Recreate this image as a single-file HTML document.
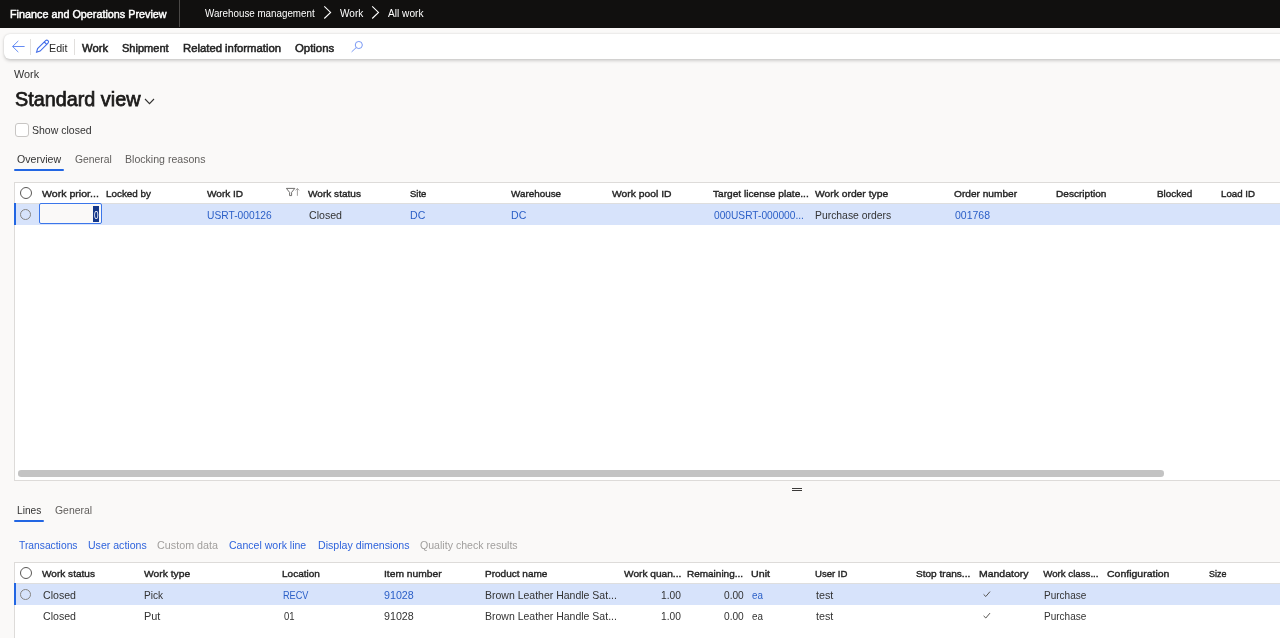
<!DOCTYPE html>
<html><head><meta charset="utf-8"><title>All work</title>
<style>
*{box-sizing:border-box;margin:0;padding:0}
html,body{width:1280px;height:638px;overflow:hidden;background:#faf9f8;font-family:"Liberation Sans",sans-serif}
.a{position:absolute}
.t{position:absolute;white-space:pre;transform-origin:0 0}
#top{left:0;top:0;width:1280px;height:27.5px;background:#11100f}
#topsep{left:179px;top:0;width:1px;height:26.5px;background:#4a4846}
#bar{left:4px;top:34px;width:1290px;height:25px;background:#fff;border-radius:6px;box-shadow:0 1.2px 3.4px rgba(0,0,0,.17),0 0 2px rgba(0,0,0,.09)}
.vsep{width:1px;background:#e1dfdd}
.grid{background:#fff;border:1px solid #dddbd9;border-right:none}
.hline{height:1px;background:#dedede}
.sel{background:#d7e3fb}
.radio{border:1.1px solid #5a5856;border-radius:50%;background:#fff}
</style></head><body>
<div class="a" id="top"></div>
<div class="a" id="topsep"></div>
<svg class="a" style="left:0;top:0" width="1280" height="28" viewBox="0 0 1280 28" fill="none" stroke="#fff" stroke-width="1.1">
<path d="M324.3 6.3 L330.6 12.4 L324.3 18.5"/>
<path d="M372.2 6.3 L378.5 12.4 L372.2 18.5"/>
</svg>
<div class="a" id="bar"></div>
<div class="a vsep" style="left:30px;top:38.5px;height:16.5px"></div>
<div class="a vsep" style="left:74px;top:38.5px;height:16.5px"></div>
<!-- action bar icons -->
<svg class="a" style="left:0;top:30px" width="400" height="32" viewBox="0 30 400 32" fill="none" stroke="#4a76ee" stroke-width="0.95">
<path d="M24.6 46.5 H12.6 M18.3 40.9 L12.6 46.5 L18.3 52.1" stroke="#5c85f2"/>
<path d="M36.6 52.2 L37.6 48.6 L45.6 40.7 a1.6 1.6 0 0 1 2.4 2.4 L40.1 51.1 Z M44.3 42 L46.7 44.4" stroke="#3f6be9" stroke-width="1.1"/>
<circle cx="358.8" cy="45" r="3.55" stroke="#6a8df3" stroke-width="0.9"/><path d="M356.2 47.6 L351.6 51.9" stroke="#6a8df3" stroke-width="0.9"/>
</svg>
<!-- title chevron -->
<svg class="a" style="left:140px;top:95px" width="20" height="12" viewBox="140 95 20 12" fill="none" stroke="#323130" stroke-width="1.1"><path d="M145 99 L149.5 103.6 L154 99"/></svg>
<!-- checkbox -->
<div class="a" style="left:15px;top:123px;width:14px;height:13.5px;border:1px solid #c8c6c4;border-radius:3px;background:#fff"></div>
<!-- tab underlines -->
<div class="a" style="left:14px;top:169px;width:50px;height:2px;background:#2266e3;border-radius:1px"></div>
<div class="a" style="left:14px;top:520px;width:30px;height:2px;background:#2266e3;border-radius:1px"></div>

<!-- grid 1 -->
<div class="a grid" style="left:13.5px;top:182px;width:1270px;height:299px"></div>
<div class="a sel" style="left:15px;top:203.4px;width:1265px;height:21.3px"></div>
<div class="a hline" style="left:15px;top:202.5px;width:1265px"></div>
<div class="a" style="left:14px;top:203.3px;width:2px;height:21.4px;background:#2266e3"></div>
<div class="a radio" style="left:20.3px;top:186.6px;width:12px;height:12px"></div>
<div class="a radio" style="left:20.2px;top:208.7px;width:11.2px;height:11.2px;border:1.15px solid #858381;background:transparent"></div>
<div class="a" style="left:39.3px;top:203.3px;width:62.6px;height:20.6px;border:1px solid #3b76ea;border-radius:2px;background:#faf9f8"></div>
<div class="a" style="left:93.2px;top:206.1px;width:5.8px;height:15.7px;background:#14378a"></div>
<!-- filter icon -->
<svg class="a" style="left:284px;top:185px" width="18" height="14" viewBox="284 185 18 14" fill="none" stroke="#605e5c" stroke-width="0.9">
<path d="M286.4 188.4 H294.8 L291.6 192.4 V195.6 H289.6 V192.4 Z"/>
<path d="M297.4 195.8 V188.6 M295.6 190.4 L297.4 188.5 L299.2 190.4" stroke="#8a8886" stroke-width="0.8"/>
</svg>
<!-- scrollbar -->
<div class="a" style="left:18px;top:470.4px;width:1145.6px;height:6.3px;border-radius:3.2px;background:#c3c3c3"></div>
<!-- splitter -->
<div class="a" style="left:791.5px;top:487.9px;width:10.6px;height:1px;background:#3b3a39"></div>
<div class="a" style="left:791.5px;top:490.1px;width:10.6px;height:1px;background:#3b3a39"></div>

<!-- grid 2 -->
<div class="a grid" style="left:13.5px;top:562px;width:1270px;height:90px"></div>
<div class="a sel" style="left:15px;top:583.4px;width:1265px;height:21.3px"></div>
<div class="a hline" style="left:15px;top:582.5px;width:1265px"></div>
<div class="a" style="left:14px;top:583.3px;width:2px;height:21.4px;background:#2266e3"></div>
<div class="a radio" style="left:20.3px;top:566.8px;width:12px;height:12px"></div>
<div class="a radio" style="left:20.2px;top:588.9px;width:11.2px;height:11.2px;border:1.15px solid #858381;background:transparent"></div>
<!-- checkmarks -->
<svg class="a" style="left:980px;top:585px" width="14" height="40" viewBox="980 585 14 40" fill="none" stroke="#55534f" stroke-width="1">
<path d="M983.6 594.4 L985.8 596.5 L990 591.6"/>
<path d="M983.6 615.9 L985.8 618 L990 613.1"/>
</svg>
<div class="a" style="left:0;top:0;width:1280px;height:638px;will-change:transform">
<span class="t" style="left:10.30px;top:9.00px;font-size:10.6px;line-height:10.6px;font-weight:400;color:#ffffff;transform:scaleX(1.0188);-webkit-text-stroke:0.45px #ffffff">Finance and Operations Preview</span>
<span class="t" style="left:205.28px;top:9.00px;font-size:10.2px;line-height:10.2px;font-weight:400;color:#ffffff;transform:scaleX(0.9617)">Warehouse management</span>
<span class="t" style="left:339.78px;top:9.00px;font-size:10.2px;line-height:10.2px;font-weight:400;color:#ffffff;transform:scaleX(0.9885)">Work</span>
<span class="t" style="left:387.80px;top:9.00px;font-size:10.2px;line-height:10.2px;font-weight:400;color:#ffffff;transform:scaleX(0.9943)">All work</span>
<span class="t" style="left:49.49px;top:43.00px;font-size:10.8px;line-height:10.8px;font-weight:400;color:#2a2a2a;transform:scaleX(0.9901)">Edit</span>
<span class="t" style="left:82.29px;top:43.00px;font-size:10.6px;line-height:10.6px;font-weight:400;color:#242424;transform:scaleX(1.0630);-webkit-text-stroke:0.5px #242424">Work</span>
<span class="t" style="left:121.93px;top:43.00px;font-size:10.6px;line-height:10.6px;font-weight:400;color:#242424;transform:scaleX(1.0432);-webkit-text-stroke:0.5px #242424">Shipment</span>
<span class="t" style="left:183.35px;top:43.00px;font-size:10.6px;line-height:10.6px;font-weight:400;color:#242424;transform:scaleX(1.0667);-webkit-text-stroke:0.5px #242424">Related information</span>
<span class="t" style="left:294.83px;top:43.00px;font-size:10.6px;line-height:10.6px;font-weight:400;color:#242424;transform:scaleX(1.0743);-webkit-text-stroke:0.5px #242424">Options</span>
<span class="t" style="left:14.25px;top:70.00px;font-size:10px;line-height:10px;font-weight:400;color:#333333;transform:scaleX(1.0842)">Work</span>
<span class="t" style="left:14.52px;top:89.00px;font-size:20.5px;line-height:20.5px;font-weight:400;color:#1b1a19;transform:scaleX(0.9657);-webkit-text-stroke:0.75px #1b1a19">Standard view</span>
<span class="t" style="left:31.52px;top:124.00px;font-size:11.6px;line-height:11.6px;font-weight:400;color:#333333;transform:scaleX(0.9075)">Show closed</span>
<span class="t" style="left:17.23px;top:154.00px;font-size:10.7px;line-height:10.7px;font-weight:400;color:#333333;transform:scaleX(0.9893)">Overview</span>
<span class="t" style="left:74.69px;top:154.00px;font-size:10.7px;line-height:10.7px;font-weight:400;color:#605e5c;transform:scaleX(0.9685)">General</span>
<span class="t" style="left:125.25px;top:154.00px;font-size:10.7px;line-height:10.7px;font-weight:400;color:#605e5c;transform:scaleX(0.9888)">Blocking reasons</span>
<span class="t" style="left:42.36px;top:189.00px;font-size:9.7px;line-height:9.7px;font-weight:400;color:#242424;transform:scaleX(1.0925);-webkit-text-stroke:0.38px #242424">Work prior...</span>
<span class="t" style="left:105.83px;top:189.00px;font-size:9.7px;line-height:9.7px;font-weight:400;color:#242424;transform:scaleX(1.0182);-webkit-text-stroke:0.38px #242424">Locked by</span>
<span class="t" style="left:207.36px;top:189.00px;font-size:9.7px;line-height:9.7px;font-weight:400;color:#242424;transform:scaleX(1.0380);-webkit-text-stroke:0.38px #242424">Work ID</span>
<span class="t" style="left:308.45px;top:189.00px;font-size:9.7px;line-height:9.7px;font-weight:400;color:#242424;transform:scaleX(1.0389);-webkit-text-stroke:0.38px #242424">Work status</span>
<span class="t" style="left:409.82px;top:189.00px;font-size:9.7px;line-height:9.7px;font-weight:400;color:#242424;transform:scaleX(0.9757);-webkit-text-stroke:0.38px #242424">Site</span>
<span class="t" style="left:511.44px;top:189.00px;font-size:9.7px;line-height:9.7px;font-weight:400;color:#242424;transform:scaleX(1.0178);-webkit-text-stroke:0.38px #242424">Warehouse</span>
<span class="t" style="left:612.36px;top:189.00px;font-size:9.7px;line-height:9.7px;font-weight:400;color:#242424;transform:scaleX(1.0659);-webkit-text-stroke:0.38px #242424">Work pool ID</span>
<span class="t" style="left:712.58px;top:189.00px;font-size:9.7px;line-height:9.7px;font-weight:400;color:#242424;transform:scaleX(1.0457);-webkit-text-stroke:0.38px #242424">Target license plate...</span>
<span class="t" style="left:815.44px;top:189.00px;font-size:9.7px;line-height:9.7px;font-weight:400;color:#242424;transform:scaleX(1.0636);-webkit-text-stroke:0.38px #242424">Work order type</span>
<span class="t" style="left:953.91px;top:189.00px;font-size:9.7px;line-height:9.7px;font-weight:400;color:#242424;transform:scaleX(1.0453);-webkit-text-stroke:0.38px #242424">Order number</span>
<span class="t" style="left:1055.77px;top:189.00px;font-size:9.7px;line-height:9.7px;font-weight:400;color:#242424;transform:scaleX(1.0411);-webkit-text-stroke:0.38px #242424">Description</span>
<span class="t" style="left:1156.82px;top:189.00px;font-size:9.7px;line-height:9.7px;font-weight:400;color:#242424;transform:scaleX(1.0190);-webkit-text-stroke:0.38px #242424">Blocked</span>
<span class="t" style="left:1220.83px;top:189.00px;font-size:9.7px;line-height:9.7px;font-weight:400;color:#242424;transform:scaleX(1.0006);-webkit-text-stroke:0.38px #242424">Load ID</span>
<span class="t" style="left:207.27px;top:210.00px;font-size:11.3px;line-height:11.3px;font-weight:400;color:#2b5fc7;transform:scaleX(0.9071)">USRT-000126</span>
<span class="t" style="left:308.54px;top:210.00px;font-size:11.3px;line-height:11.3px;font-weight:400;color:#333333;transform:scaleX(0.9382)">Closed</span>
<span class="t" style="left:409.81px;top:210.00px;font-size:11.3px;line-height:11.3px;font-weight:400;color:#2b5fc7;transform:scaleX(0.9373)">DC</span>
<span class="t" style="left:510.81px;top:210.00px;font-size:11.3px;line-height:11.3px;font-weight:400;color:#2b5fc7;transform:scaleX(0.9373)">DC</span>
<span class="t" style="left:713.96px;top:210.00px;font-size:11.3px;line-height:11.3px;font-weight:400;color:#2b5fc7;transform:scaleX(0.9019)">000USRT-000000...</span>
<span class="t" style="left:814.85px;top:210.00px;font-size:11.3px;line-height:11.3px;font-weight:400;color:#333333;transform:scaleX(0.9188)">Purchase orders</span>
<span class="t" style="left:954.89px;top:210.00px;font-size:11.3px;line-height:11.3px;font-weight:400;color:#2b5fc7;transform:scaleX(0.9277)">001768</span>
<span class="t" style="left:93.77px;top:210.00px;font-size:11.3px;line-height:11.3px;font-weight:400;color:#ffffff;transform:scaleX(0.7169)">0</span>
<span class="t" style="left:16.71px;top:505.00px;font-size:11.3px;line-height:11.3px;font-weight:400;color:#333333;transform:scaleX(0.9010)">Lines</span>
<span class="t" style="left:55.20px;top:505.00px;font-size:11.3px;line-height:11.3px;font-weight:400;color:#605e5c;transform:scaleX(0.9230)">General</span>
<span class="t" style="left:18.74px;top:540.00px;font-size:11.3px;line-height:11.3px;font-weight:400;color:#2e63dc;transform:scaleX(0.9103)">Transactions</span>
<span class="t" style="left:87.69px;top:540.00px;font-size:11.3px;line-height:11.3px;font-weight:400;color:#2e63dc;transform:scaleX(0.9346)">User actions</span>
<span class="t" style="left:156.50px;top:540.00px;font-size:11.3px;line-height:11.3px;font-weight:400;color:#a19f9d;transform:scaleX(0.9539)">Custom data</span>
<span class="t" style="left:229.32px;top:540.00px;font-size:11.3px;line-height:11.3px;font-weight:400;color:#2e63dc;transform:scaleX(0.9315)">Cancel work line</span>
<span class="t" style="left:317.53px;top:540.00px;font-size:11.3px;line-height:11.3px;font-weight:400;color:#2e63dc;transform:scaleX(0.9403)">Display dimensions</span>
<span class="t" style="left:419.71px;top:540.00px;font-size:11.3px;line-height:11.3px;font-weight:400;color:#a19f9d;transform:scaleX(0.9371)">Quality check results</span>
<span class="t" style="left:42.45px;top:569.00px;font-size:9.7px;line-height:9.7px;font-weight:400;color:#242424;transform:scaleX(1.0389);-webkit-text-stroke:0.38px #242424">Work status</span>
<span class="t" style="left:143.87px;top:569.00px;font-size:9.7px;line-height:9.7px;font-weight:400;color:#242424;transform:scaleX(1.0615);-webkit-text-stroke:0.38px #242424">Work type</span>
<span class="t" style="left:282.48px;top:569.00px;font-size:9.7px;line-height:9.7px;font-weight:400;color:#242424;transform:scaleX(1.0343);-webkit-text-stroke:0.38px #242424">Location</span>
<span class="t" style="left:383.53px;top:569.00px;font-size:9.7px;line-height:9.7px;font-weight:400;color:#242424;transform:scaleX(1.0609);-webkit-text-stroke:0.38px #242424">Item number</span>
<span class="t" style="left:484.68px;top:569.00px;font-size:9.7px;line-height:9.7px;font-weight:400;color:#242424;transform:scaleX(1.0353);-webkit-text-stroke:0.38px #242424">Product name</span>
<span class="t" style="left:624.45px;top:569.00px;font-size:9.7px;line-height:9.7px;font-weight:400;color:#242424;transform:scaleX(1.0465);-webkit-text-stroke:0.38px #242424">Work quan...</span>
<span class="t" style="left:687.48px;top:569.00px;font-size:9.7px;line-height:9.7px;font-weight:400;color:#242424;transform:scaleX(1.0303);-webkit-text-stroke:0.38px #242424">Remaining...</span>
<span class="t" style="left:750.89px;top:569.00px;font-size:9.7px;line-height:9.7px;font-weight:400;color:#242424;transform:scaleX(1.1005);-webkit-text-stroke:0.38px #242424">Unit</span>
<span class="t" style="left:814.55px;top:569.00px;font-size:9.7px;line-height:9.7px;font-weight:400;color:#242424;transform:scaleX(0.9881);-webkit-text-stroke:0.38px #242424">User ID</span>
<span class="t" style="left:915.75px;top:569.00px;font-size:9.7px;line-height:9.7px;font-weight:400;color:#242424;transform:scaleX(1.0387);-webkit-text-stroke:0.38px #242424">Stop trans...</span>
<span class="t" style="left:979.39px;top:569.00px;font-size:9.7px;line-height:9.7px;font-weight:400;color:#242424;transform:scaleX(1.0804);-webkit-text-stroke:0.38px #242424">Mandatory</span>
<span class="t" style="left:1043.19px;top:569.00px;font-size:9.7px;line-height:9.7px;font-weight:400;color:#242424;transform:scaleX(1.0000);-webkit-text-stroke:0.38px #242424">Work class...</span>
<span class="t" style="left:1106.75px;top:569.00px;font-size:9.7px;line-height:9.7px;font-weight:400;color:#242424;transform:scaleX(1.0839);-webkit-text-stroke:0.38px #242424">Configuration</span>
<span class="t" style="left:1208.84px;top:569.00px;font-size:9.7px;line-height:9.7px;font-weight:400;color:#242424;transform:scaleX(0.9240);-webkit-text-stroke:0.38px #242424">Size</span>
<span class="t" style="left:42.54px;top:590.00px;font-size:11.3px;line-height:11.3px;font-weight:400;color:#333333;transform:scaleX(0.9382)">Closed</span>
<span class="t" style="left:143.90px;top:590.00px;font-size:11.3px;line-height:11.3px;font-weight:400;color:#333333;transform:scaleX(0.8920)">Pick</span>
<span class="t" style="left:283.36px;top:590.00px;font-size:11.3px;line-height:11.3px;font-weight:400;color:#2b5fc7;transform:scaleX(0.8114)">RECV</span>
<span class="t" style="left:383.87px;top:590.00px;font-size:11.3px;line-height:11.3px;font-weight:400;color:#2b5fc7;transform:scaleX(0.9468)">91028</span>
<span class="t" style="left:484.81px;top:590.00px;font-size:11.3px;line-height:11.3px;font-weight:400;color:#333333;transform:scaleX(0.9292)">Brown Leather Handle Sat...</span>
<span class="t" style="left:660.68px;top:590.00px;font-size:11.3px;line-height:11.3px;font-weight:400;color:#333333;transform:scaleX(0.9035)">1.00</span>
<span class="t" style="left:724.26px;top:590.00px;font-size:11.3px;line-height:11.3px;font-weight:400;color:#333333;transform:scaleX(0.8984)">0.00</span>
<span class="t" style="left:751.64px;top:590.00px;font-size:11.3px;line-height:11.3px;font-weight:400;color:#2b5fc7;transform:scaleX(0.8683)">ea</span>
<span class="t" style="left:815.59px;top:590.00px;font-size:11.3px;line-height:11.3px;font-weight:400;color:#333333;transform:scaleX(0.9509)">test</span>
<span class="t" style="left:1044.39px;top:590.00px;font-size:11.3px;line-height:11.3px;font-weight:400;color:#333333;transform:scaleX(0.8870)">Purchase</span>
<span class="t" style="left:42.54px;top:611.00px;font-size:11.3px;line-height:11.3px;font-weight:400;color:#333333;transform:scaleX(0.9382)">Closed</span>
<span class="t" style="left:143.72px;top:611.00px;font-size:11.3px;line-height:11.3px;font-weight:400;color:#333333;transform:scaleX(0.9668)">Put</span>
<span class="t" style="left:283.66px;top:611.00px;font-size:11.3px;line-height:11.3px;font-weight:400;color:#333333;transform:scaleX(0.8431)">01</span>
<span class="t" style="left:383.87px;top:611.00px;font-size:11.3px;line-height:11.3px;font-weight:400;color:#333333;transform:scaleX(0.9468)">91028</span>
<span class="t" style="left:484.81px;top:611.00px;font-size:11.3px;line-height:11.3px;font-weight:400;color:#333333;transform:scaleX(0.9292)">Brown Leather Handle Sat...</span>
<span class="t" style="left:660.68px;top:611.00px;font-size:11.3px;line-height:11.3px;font-weight:400;color:#333333;transform:scaleX(0.9035)">1.00</span>
<span class="t" style="left:724.26px;top:611.00px;font-size:11.3px;line-height:11.3px;font-weight:400;color:#333333;transform:scaleX(0.8984)">0.00</span>
<span class="t" style="left:751.64px;top:611.00px;font-size:11.3px;line-height:11.3px;font-weight:400;color:#333333;transform:scaleX(0.8683)">ea</span>
<span class="t" style="left:815.59px;top:611.00px;font-size:11.3px;line-height:11.3px;font-weight:400;color:#333333;transform:scaleX(0.9509)">test</span>
<span class="t" style="left:1044.39px;top:611.00px;font-size:11.3px;line-height:11.3px;font-weight:400;color:#333333;transform:scaleX(0.8870)">Purchase</span>
</div>
</body></html>
